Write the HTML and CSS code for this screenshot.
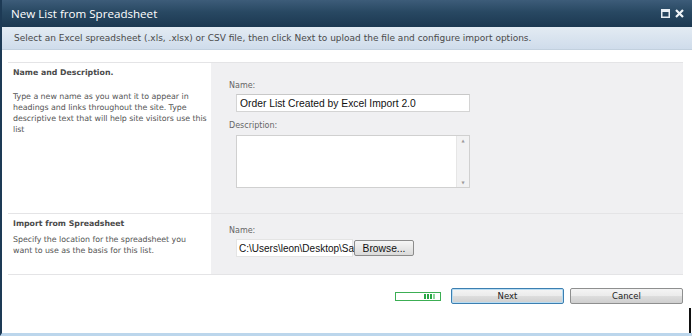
FILE: index.html
```html
<!DOCTYPE html>
<html>
<head>
<meta charset="utf-8">
<title>New List from Spreadsheet</title>
<link rel="stylesheet" href="styles.css">
</head>
<body>
<div class="dialog">
  <div class="titlebar">
    <span class="title">New List from Spreadsheet</span>
    <span class="controls">
      <svg class="ctl" width="9" height="9" viewBox="0 0 9 9"><rect x="0.75" y="0.75" width="7.5" height="7.5" fill="none" stroke="#e8eef4" stroke-width="1.5"/><rect x="0" y="0" width="9" height="3" fill="#e8eef4"/></svg>
      <svg class="ctl" width="9" height="9" viewBox="0 0 9 9"><path d="M1 1 L8 8 M8 1 L1 8" stroke="#f0f4f8" stroke-width="2.2"/></svg>
    </span>
  </div>
  <div class="subtitle">Select an Excel spreadsheet (.xls, .xlsx) or CSV file, then click Next to upload the file and configure import options.</div>
  <div class="content">
    <div class="section sec-name">
      <div class="left">
        <div class="heading">Name and Description.</div>
        <div class="desc">Type a new name as you want it to appear in headings and links throughout the site. Type descriptive text that will help site visitors use this list</div>
      </div>
      <div class="right">
        <div class="label">Name:</div>
        <div class="textbox">Order List Created by Excel Import 2.0</div>
        <div class="label label-desc">Description:</div>
        <div class="textarea">
          <div class="ta-body"></div>
          <div class="scroll"><span class="arrow">&#9650;</span><span class="arrow">&#9660;</span></div>
        </div>
      </div>
    </div>
    <div class="section sec-import">
      <div class="left">
        <div class="heading">Import from Spreadsheet</div>
        <div class="desc">Specify the location for the spreadsheet you want to use as the basis for this list.</div>
      </div>
      <div class="right">
        <div class="label">Name:</div>
        <div class="filerow">
          <div class="filebox">C:\Users\leon\Desktop\Sa</div>
          <div class="browse">Browse...</div>
        </div>
      </div>
    </div>
    <div class="buttons">
      <div class="progress"><span class="bar"></span><span class="bar"></span><span class="bar"></span><span class="bar light"></span></div>
      <div class="btn btn-next">Next</div>
      <div class="btn">Cancel</div>
    </div>
    <div class="footer"><span class="edge"></span></div>
  </div>
</div>
</body>
</html>
```

FILE: styles.css
```css
html, body {
  margin: 0;
  padding: 0;
  background: #ffffff;
}
.dialog {
  width: 692px;
  height: 336px;
  box-sizing: border-box;
  border-left: 2px solid #1d3a55;
  border-bottom: 3px solid #bcd6ec;
  display: flex;
  flex-direction: column;
  overflow: hidden;
  font-family: "DejaVu Sans", Verdana, sans-serif;
}
.titlebar {
  height: 27px;
  flex: none;
  margin-left: -2px;
  padding: 0 8px 0 11px;
  background: linear-gradient(#3d5c79, #284862 45%, #1c3851);
  display: flex;
  align-items: center;
  justify-content: space-between;
}
.title {
  font-family: "Open Sans", sans-serif;
  font-size: 11.6px;
  color: #ffffff;
}
.controls {
  display: flex;
  gap: 5px;
  align-items: center;
}
.subtitle {
  height: 23px;
  flex: none;
  box-sizing: border-box;
  padding: 0 0 0 12px;
  background: linear-gradient(#e3ebf3, #cfdceb);
  border-bottom: 1px solid #c2d0de;
  display: flex;
  align-items: center;
  font-size: 9px;
  color: #4a4a4a;
}
.content {
  flex: 1;
  padding: 12px 9px 0 6px;
  display: flex;
  flex-direction: column;
}
.section {
  display: grid;
  grid-template-columns: 203px 1fr;
  border-top: 1px solid #e4e4e6;
}
.sec-name { height: 150px; }
.sec-import { height: 60px; border-bottom: 1px solid #e4e4e6; }
.left {
  padding: 5px 0 0 5px;
  background: #ffffff;
}
.sec-import .left { padding-right: 10px; }
.right {
  background: #f0f0f2;
  padding: 18px 0 0 18px;
}
.sec-import .right { padding-top: 12px; }
.heading {
  font-weight: bold;
  font-size: 7.8px;
  color: #4a4a4a;
  margin-bottom: 14px;
}
.sec-import .heading { margin-bottom: 6px; }
.desc {
  font-size: 7.9px;
  line-height: 11px;
  letter-spacing: -0.05px;
  color: #555555;
}
.label {
  font-size: 8px;
  color: #666666;
  height: 10px;
}
.textbox {
  margin: 3px 0 0 7px;
  width: 234px;
  height: 18px;
  box-sizing: border-box;
  background: #fff;
  border: 1px solid #d4d4d4;
  border-top-color: #c8c8c8;
  font-family: "Liberation Sans", Arial, sans-serif;
  font-size: 10.3px;
  color: #111;
  padding: 0 0 0 3px;
  display: flex;
  align-items: center;
}
.label-desc { margin-top: 9px; }
.textarea {
  margin: 4px 0 0 7px;
  width: 234px;
  height: 53px;
  box-sizing: border-box;
  border: 1px solid #d0d0d0;
  background: #fff;
  display: flex;
}
.ta-body { flex: 1; }
.scroll {
  width: 12px;
  background: #f2f2f3;
  border-left: 1px solid #e6e6e6;
  display: flex;
  flex-direction: column;
  justify-content: space-between;
  align-items: center;
  padding: 2px 0 1px;
}
.arrow {
  font-size: 4px;
  color: #9a9a9a;
  line-height: 6px;
}
.filerow {
  margin: 3px 0 0 7px;
  display: flex;
  align-items: center;
}
.filebox {
  width: 117px;
  height: 18px;
  box-sizing: border-box;
  background: #fff;
  border: 1px solid #e4e4e4;
  font-family: "Liberation Sans", Arial, sans-serif;
  font-size: 10px;
  color: #111;
  padding-left: 2px;
  display: flex;
  align-items: center;
  white-space: nowrap;
}
.browse {
  margin-left: 1px;
  width: 60px;
  height: 16px;
  box-sizing: border-box;
  border: 1px solid #8c8c8c;
  border-radius: 2px;
  background: linear-gradient(#f6f6f6, #e8e8e8 50%, #dadada);
  font-family: "Liberation Sans", Arial, sans-serif;
  font-size: 10.3px;
  color: #111;
  display: flex;
  align-items: center;
  justify-content: center;
}
.buttons {
  margin-top: 13px;
  display: flex;
  justify-content: flex-end;
  align-items: center;
  gap: 6px;
}
.progress {
  width: 46px;
  height: 9px;
  box-sizing: border-box;
  border: 1px solid #3cae54;
  background: #fff;
  display: flex;
  justify-content: flex-end;
  gap: 1px;
  padding: 1px 5px 1px 0;
  margin-right: 4px;
}
.bar {
  width: 2px;
  background: #28a745;
}
.bar.light { background: #8fd79d; }
.btn {
  width: 113px;
  height: 16px;
  box-sizing: border-box;
  border: 1px solid #8e8f8f;
  border-radius: 2px;
  background: linear-gradient(#f4f4f4, #ebebeb 50%, #dddddd 51%, #cfcfcf);
  font-family: "DejaVu Sans", Verdana, sans-serif;
  font-size: 8.5px;
  color: #222;
  display: flex;
  align-items: center;
  justify-content: center;
}
.btn-next {
  border-color: #3c7fb1;
  box-shadow: inset 0 0 0 1px #b8dcf2;
}
.footer {
  flex: 1;
  display: flex;
  justify-content: flex-end;
  align-items: flex-end;
  margin-right: -9px;
}
.edge {
  width: 2px;
  height: 25px;
  background: #111;
  margin-right: 1px;
}
```
